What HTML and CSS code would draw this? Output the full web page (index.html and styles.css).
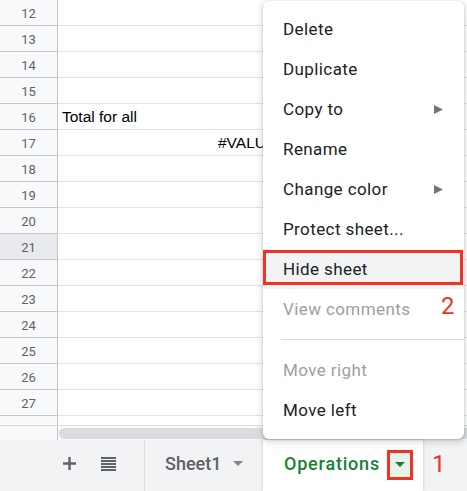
FILE: index.html
```html
<!DOCTYPE html>
<html>
<head>
<meta charset="utf-8">
<link rel="stylesheet" href="styles.css">
</head>
<body>
<div class="app">
  <div class="grid">
    <div class="row"><div class="rh">12</div><div class="cell"></div></div>
    <div class="row"><div class="rh">13</div><div class="cell"></div></div>
    <div class="row"><div class="rh">14</div><div class="cell"></div></div>
    <div class="row"><div class="rh">15</div><div class="cell"></div></div>
    <div class="row"><div class="rh">16</div><div class="cell"><span class="txt">Total for all</span></div></div>
    <div class="row"><div class="rh">17</div><div class="cell"><span class="txt val">#VALUE!</span></div></div>
    <div class="row"><div class="rh">18</div><div class="cell"></div></div>
    <div class="row"><div class="rh">19</div><div class="cell"></div></div>
    <div class="row"><div class="rh">20</div><div class="cell"></div></div>
    <div class="row"><div class="rh sel">21</div><div class="cell"></div></div>
    <div class="row"><div class="rh">22</div><div class="cell"></div></div>
    <div class="row"><div class="rh">23</div><div class="cell"></div></div>
    <div class="row"><div class="rh">24</div><div class="cell"></div></div>
    <div class="row"><div class="rh">25</div><div class="cell"></div></div>
    <div class="row"><div class="rh">26</div><div class="cell"></div></div>
    <div class="row"><div class="rh">27</div><div class="cell"></div></div>
    <div class="row"><div class="rh">28</div><div class="cell"></div></div>
  </div>
  <div class="hscroll">
    <div class="hs-corner"></div>
    <div class="hs-track"><div class="hs-thumb"></div></div>
  </div>
  <div class="tabbar">
    <div class="addbtn">
      <svg width="13" height="13" viewBox="0 0 13 13"><path d="M6.5 0v13M0 6.5h13" stroke="#5f6368" stroke-width="2.4" fill="none"/></svg>
    </div>
    <div class="listbtn">
      <svg width="15" height="14" viewBox="0 0 15 14"><g fill="#5f6368"><rect x="0" y="0" width="15" height="2"/><rect x="0" y="3" width="15" height="2"/><rect x="0" y="6" width="15" height="2"/><rect x="0" y="9" width="15" height="2"/><rect x="0" y="12" width="15" height="2"/></g></svg>
    </div>
    <div class="sep"></div>
    <div class="tab">
      <span class="tabname">Sheet1</span>
      <svg class="caret" width="10" height="5" viewBox="0 0 10 5"><path d="M0 0h10L5 5z" fill="#80868b"/></svg>
    </div>
    <div class="tab active">
      <span class="tabname">Operations</span>
      <div class="caretbox">
        <svg width="10" height="5" viewBox="0 0 10 5"><path d="M0 0h10L5 5z" fill="#188038"/></svg>
      </div>
    </div>
    <div class="num">1</div>
  </div>

  <div class="menu">
    <div class="item">Delete</div>
    <div class="item">Duplicate</div>
    <div class="item">Copy to<svg class="sub" width="9" height="9" viewBox="0 0 9 9"><path d="M0 0l9 4.5L0 9z" fill="#757575"/></svg></div>
    <div class="item">Rename</div>
    <div class="item">Change color<svg class="sub" width="9" height="9" viewBox="0 0 9 9"><path d="M0 0l9 4.5L0 9z" fill="#757575"/></svg></div>
    <div class="item">Protect sheet...</div>
    <div class="item hover">Hide sheet</div>
    <div class="item disabled">View comments</div>
    <div class="msep"></div>
    <div class="item disabled">Move right</div>
    <div class="item">Move left</div>
  </div>
  <div class="hl-box"></div>
  <div class="num num2">2</div>
</div>
</body>
</html>
```

FILE: styles.css
```css
* { box-sizing: border-box; }
html, body { margin: 0; padding: 0; }
body {
  width: 467px;
  height: 491px;
  overflow: hidden;
  background: #fff;
  font-family: Roboto, "Liberation Sans", Arial, sans-serif;
}
.app {
  position: relative;
  width: 467px;
  height: 491px;
  display: flex;
  flex-direction: column;
}
.grid {
  height: 425px;
  overflow: hidden;
  flex: none;
}
.row {
  display: flex;
  height: 26px;
}
.rh {
  width: 58px;
  flex: none;
  background: #f8f9fa;
  border-right: 1px solid #c4c7c5;
  border-bottom: 1px solid #c4c7c5;
  color: #5f6368;
  font-size: 13px;
  display: flex;
  align-items: center;
  justify-content: center;
  padding-top: 1px;
}
.rh.sel { background: #e8eaed; }
.cell {
  flex: 1;
  border-bottom: 1px solid #e2e3e3;
  display: flex;
  align-items: center;
  padding-left: 4px;
}
.txt {
  font-family: "Liberation Sans", Arial, sans-serif;
  font-size: 15.5px;
  color: #000;
  padding-top: 1px;
}
.txt.val { padding-left: 156px; }
.hscroll {
  height: 15px;
  flex: none;
  display: flex;
  border-top: 1px solid #dadce0;
}
.hs-corner {
  width: 58px;
  background: #f8f9fa;
  border-right: 1px solid #c4c7c5;
}
.hs-track {
  flex: 1;
  background: #f8f9fa;
  padding: 2px 0 1px 1px;
}
.hs-thumb {
  height: 11px;
  background: #dadce0;
  border-radius: 6px 0 0 6px;
}
.tabbar {
  height: 51px;
  flex: none;
  background: #f1f3f4;
  display: flex;
  align-items: stretch;
}
.addbtn {
  margin-left: 63px;
  width: 13px;
  display: flex;
  align-items: center;
  padding-bottom: 4px;
}
.listbtn {
  margin-left: 25px;
  width: 15px;
  display: flex;
  align-items: center;
  padding-bottom: 4px;
}
.sep {
  margin-left: 28px;
  width: 1px;
  background: #dadce0;
}
.tab {
  display: flex;
  align-items: center;
  padding: 0 20px 4px 20px;
  font-size: 18px;
  font-weight: 500;
  color: #5f6368;
  width: 118px;
}
.tab .caret { margin-left: auto; }
.tab.active {
  background: #fff;
  color: #188038;
  width: 160px;
  padding: 0 10px 4px 21px;
  box-shadow: 0 0 3px rgba(60, 64, 67, 0.25);
  position: relative;
  letter-spacing: 0.8px;
}
.caretbox {
  margin-left: auto;
  width: 26px;
  height: 30px;
  border: 3px solid #f03324;
  background: #e6f4ea;
  display: flex;
  align-items: center;
  justify-content: center;
  margin-top: 2px;
}
.num {
  color: #f03324;
  font-size: 24px;
  font-family: Roboto, "Liberation Sans", sans-serif;
  display: flex;
  align-items: center;
  margin-left: 9px;
  padding-bottom: 4px;
}
.num2 {
  position: absolute;
  left: 432px;
  top: 292px;
  line-height: 28px;
  padding: 0;
}
.menu {
  position: absolute;
  left: 263px;
  top: 1px;
  width: 201px;
  height: 438px;
  background: #fff;
  border-radius: 6px;
  box-shadow: 0 2px 6px 2px rgba(60, 64, 67, 0.15), 0 1px 2px rgba(60, 64, 67, 0.3);
  padding: 8px 0;
  z-index: 5;
}
.item {
  height: 40px;
  display: flex;
  align-items: center;
  padding: 0 21px 0 20px;
  font-size: 17px;
  letter-spacing: 0.4px;
  color: #202124;
}
.item .sub { margin-left: auto; }
.item.hover { background: #f1f3f4; }
.item.disabled { color: #9aa0a6; }
.msep {
  height: 1px;
  background: #dadce0;
  margin: 10px 0 10px 18px;
}
.hl-box {
  position: absolute;
  left: 263px;
  top: 250px;
  width: 200px;
  height: 35px;
  border: 3px solid #f03324;
  z-index: 6;
}
.num2 { z-index: 7; }
```
